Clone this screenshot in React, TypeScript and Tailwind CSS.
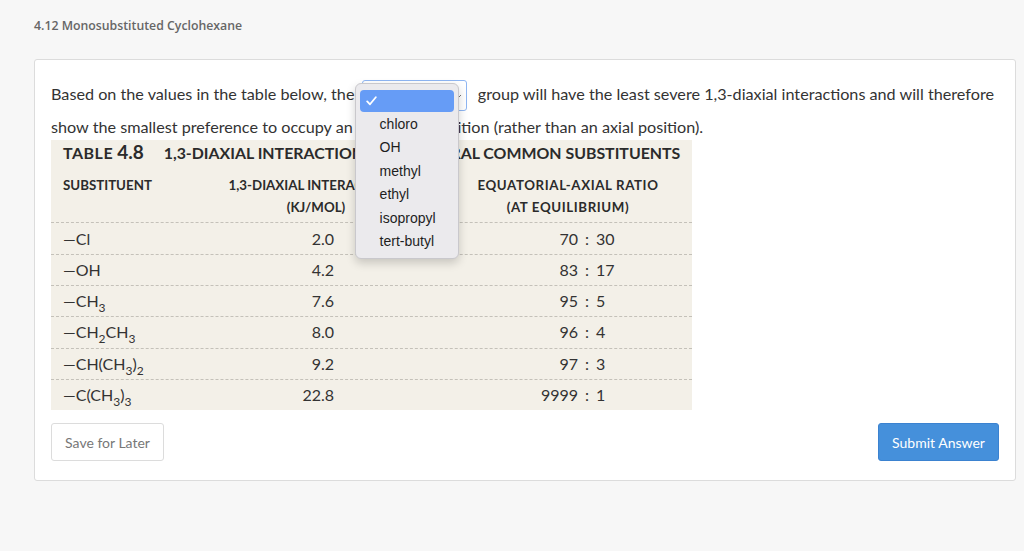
import React from "react";

const S = ({ c }: { c: string }) => <sub className="text-[12px] align-[-2px]">{c}</sub>;

const rows: { sub: React.ReactNode; val: string; l: string; r: string }[] = [
  { sub: <>—Cl</>, val: "2.0", l: "70", r: "30" },
  { sub: <>—OH</>, val: "4.2", l: "83", r: "17" },
  { sub: <>—CH<S c="3" /></>, val: "7.6", l: "95", r: "5" },
  { sub: <>—CH<S c="2" />CH<S c="3" /></>, val: "8.0", l: "96", r: "4" },
  { sub: <>—CH(CH<S c="3" />)<S c="2" /></>, val: "9.2", l: "97", r: "3" },
  { sub: <>—C(CH<S c="3" />)<S c="3" /></>, val: "22.8", l: "9999", r: "1" },
];

const options = ["chloro", "OH", "methyl", "ethyl", "isopropyl", "tert-butyl"];

function Dropdown() {
  return (
    <span className="relative inline-block align-middle ml-[3px] mr-[7px] w-[105px] h-[31px] rounded-[3px] border border-[#8fb6f2] bg-white">
      <svg className="absolute right-[4px] top-[13px]" width="7" height="5" viewBox="0 0 7 5">
        <path d="M1 1 L3.5 3.5 L6 1" fill="none" stroke="#777" strokeWidth="1" />
      </svg>
      <span className="absolute left-[-8px] top-[2px] z-10 w-[104px] rounded-[6px] border border-[#c9c8cc] bg-[#ebeaed] pt-[6px] pb-[5px] px-[4px] shadow-[0_4px_10px_rgba(0,0,0,0.18)] leading-none">
        <span className="flex h-[22px] items-center rounded-[4px] bg-[#669cf6] pl-[6px]">
          <svg width="11" height="10" viewBox="0 0 11 10">
            <path d="M1.2 5.4 L4 8.3 L9.8 1.2" fill="none" stroke="white" strokeWidth="1.8" strokeLinecap="round" strokeLinejoin="round" />
          </svg>
        </span>
        {options.map((o) => (
          <span
            key={o}
            className="flex h-[23.4px] items-center pl-[20px] text-[14px] text-[#1e1e1e] [font-family:'Liberation_Sans',Arial,sans-serif]"
          >
            {o}
          </span>
        ))}
      </span>
    </span>
  );
}

export default function App() {
  return (
    <div className="min-h-[551px] w-[1024px] bg-[#f7f7f7] [font-family:Lato,sans-serif]">
      <div className="px-[34px] pt-[18px]">
        <div className="text-[12.3px] font-semibold leading-[16px] text-[#666] [font-family:'Open_Sans',sans-serif]">
          4.12 Monosubstituted Cyclohexane
        </div>
        <div className="mt-[25px] w-[982px] rounded-[3px] border border-[#dcdcdc] bg-white px-[16px] pt-[18px] pb-[17px]">
          <p className="text-[16.2px] leading-[31px] text-[#333] whitespace-nowrap">
            Based on the values in the table below, the{" "}
            <Dropdown />{" "}
            group will have the least severe 1,3-diaxial interactions and will therefore
            <br />
            show the smallest preference to occupy an equatorial position (rather than an axial position).
          </p>
          <div className="mt-[-2px] flex w-[641px] flex-col bg-[#f3f0e8] pl-[12px] text-[#2b2b2b]">
            <div className="-mt-[3px] flex h-[24px] items-baseline pt-[1px] font-bold">
              <span className="text-[16px] tracking-[0.5px]">TABLE</span>
              <span className="ml-[4px] text-[19px]">4.8</span>
              <span className="ml-[20px] text-[15.9px]">1,3-DIAXIAL INTERACTIONS FOR SEVERAL COMMON SUBSTITUENTS</span>
            </div>
            <div className="mt-[13px] flex pb-[4px] text-[13.3px] font-bold leading-[22px]">
              <div className="w-[148px]">SUBSTITUENT</div>
              <div className="w-[210px] text-center">
                1,3-DIAXIAL INTERACTIONS
                <br />
                (KJ/MOL)
              </div>
              <div className="ml-[23px] w-[248px] text-center tracking-[0.6px]">
                EQUATORIAL-AXIAL RATIO
                <br />
                (AT EQUILIBRIUM)
              </div>
            </div>
            <div className="text-[16px] text-[#333]">
              {rows.map((r, i) => (
                <div
                  key={i}
                  className="-ml-[12px] flex h-[31.3px] items-center border-t border-dashed border-[#c4c1b9] pl-[12px]"
                >
                  <div className="w-[148px]">{r.sub}</div>
                  <div className="w-[123px] text-right">{r.val}</div>
                  <div className="ml-[110px] flex">
                    <span className="w-[134px] text-right">{r.l}</span>
                    <span className="w-[18px] text-center">:</span>
                    <span>{r.r}</span>
                  </div>
                </div>
              ))}
            </div>
          </div>
          <div className="mt-[13px] mb-[2px] flex justify-between">
            <button className="h-[38px] w-[113px] rounded-[3px] border border-[#dcdcdc] bg-white text-[14px] text-[#777]">
              Save for Later
            </button>
            <button className="h-[38px] w-[121px] rounded-[3px] border border-[#3b82d0] bg-[#4590db] text-[14px] text-white">
              Submit Answer
            </button>
          </div>
        </div>
      </div>
    </div>
  );
}
